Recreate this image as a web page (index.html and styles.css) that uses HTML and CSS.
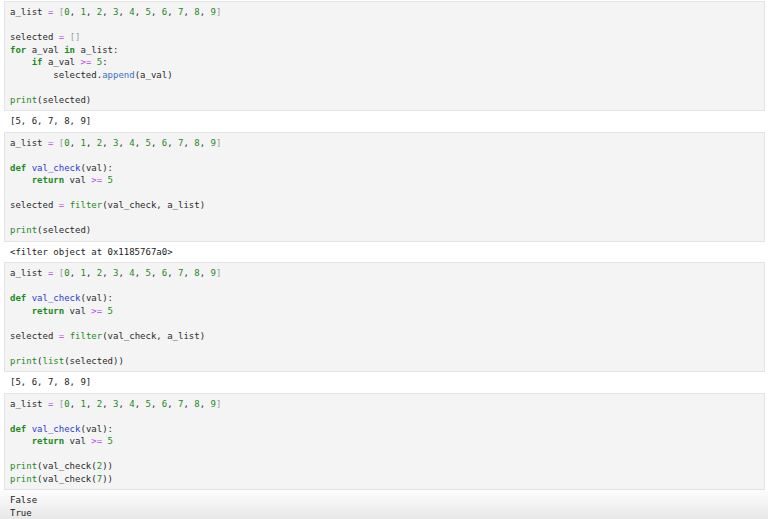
FILE: index.html
```html
<!DOCTYPE html>
<html>
<head>
<meta charset="utf-8">
<link rel="stylesheet" href="styles.css">
</head>
<body>
<div class="notebook">
  <div class="cell"><pre class="code">a_list <span class="o">=</span> <span class="b">[</span><span class="n">0</span>, <span class="n">1</span>, <span class="n">2</span>, <span class="n">3</span>, <span class="n">4</span>, <span class="n">5</span>, <span class="n">6</span>, <span class="n">7</span>, <span class="n">8</span>, <span class="n">9</span><span class="b">]</span>

selected <span class="o">=</span> <span class="b">[]</span>
<span class="k">for</span> a_val <span class="k">in</span> a_list:
    <span class="k">if</span> a_val <span class="o">&gt;=</span> <span class="n">5</span>:
        selected.<span class="p">append</span>(a_val)

<span class="bi">print</span>(selected)</pre></div>
  <pre class="output">[5, 6, 7, 8, 9]</pre>

  <div class="cell"><pre class="code">a_list <span class="o">=</span> <span class="b">[</span><span class="n">0</span>, <span class="n">1</span>, <span class="n">2</span>, <span class="n">3</span>, <span class="n">4</span>, <span class="n">5</span>, <span class="n">6</span>, <span class="n">7</span>, <span class="n">8</span>, <span class="n">9</span><span class="b">]</span>

<span class="k">def</span> <span class="f">val_check</span>(val):
    <span class="k">return</span> val <span class="o">&gt;=</span> <span class="n">5</span>

selected <span class="o">=</span> <span class="bi">filter</span>(val_check, a_list)

<span class="bi">print</span>(selected)</pre></div>
  <pre class="output">&lt;filter object at 0x1185767a0&gt;</pre>

  <div class="cell"><pre class="code">a_list <span class="o">=</span> <span class="b">[</span><span class="n">0</span>, <span class="n">1</span>, <span class="n">2</span>, <span class="n">3</span>, <span class="n">4</span>, <span class="n">5</span>, <span class="n">6</span>, <span class="n">7</span>, <span class="n">8</span>, <span class="n">9</span><span class="b">]</span>

<span class="k">def</span> <span class="f">val_check</span>(val):
    <span class="k">return</span> val <span class="o">&gt;=</span> <span class="n">5</span>

selected <span class="o">=</span> <span class="bi">filter</span>(val_check, a_list)

<span class="bi">print</span>(<span class="bi">list</span>(selected))</pre></div>
  <pre class="output">[5, 6, 7, 8, 9]</pre>

  <div class="cell"><pre class="code">a_list <span class="o">=</span> <span class="b">[</span><span class="n">0</span>, <span class="n">1</span>, <span class="n">2</span>, <span class="n">3</span>, <span class="n">4</span>, <span class="n">5</span>, <span class="n">6</span>, <span class="n">7</span>, <span class="n">8</span>, <span class="n">9</span><span class="b">]</span>

<span class="k">def</span> <span class="f">val_check</span>(val):
    <span class="k">return</span> val <span class="o">&gt;=</span> <span class="n">5</span>

<span class="bi">print</span>(val_check(<span class="n">2</span>))
<span class="bi">print</span>(val_check(<span class="n">7</span>))</pre></div>
  <pre class="output">False
True</pre>
</div>
<div class="fade"></div>
</body>
</html>
```

FILE: styles.css
```css
html, body {
  margin: 0;
  padding: 0;
  background: #ffffff;
}

body {
  padding: 1px 3px 0 4px;
  overflow: hidden;
  height: 519px;
  box-sizing: border-box;
}

.notebook {
  display: flex;
  flex-direction: column;
}

.cell {
  background: #f4f4f4;
  border: 1px solid #e4e4e4;
  padding: 4px 5px;
}

pre {
  margin: 0;
  font-family: "DejaVu Sans Mono", "Liberation Mono", monospace;
  font-size: 9px;
  line-height: 12.5px;
  color: #2a2a2a;
}

.output {
  padding: 4px 6px;
  color: #222;
}

.k { color: #1d8a1d; font-weight: bold; }
.n { color: #1d8a1d; }
.bi { color: #1d8a1d; }
.o { color: #b44ae8; }
.b { color: #9a9a9a; }
.f { color: #2d3bd8; }
.p { color: #3a72c0; }

.fade {
  position: fixed;
  left: 0;
  right: 0;
  bottom: 0;
  height: 32px;
  background: linear-gradient(to bottom, rgba(0,0,0,0), rgba(0,0,0,0.09));
  pointer-events: none;
}
```
